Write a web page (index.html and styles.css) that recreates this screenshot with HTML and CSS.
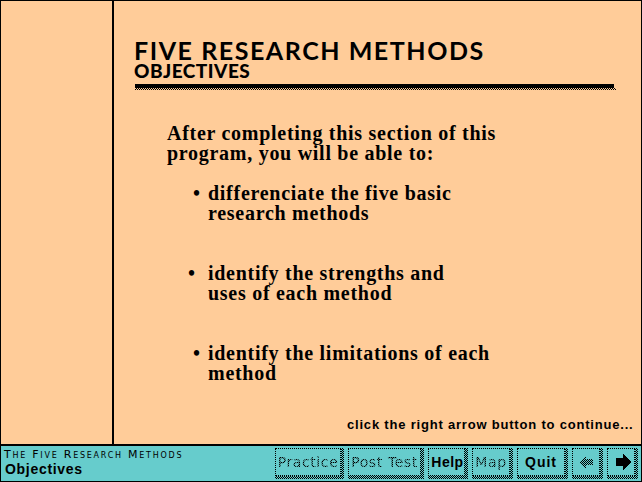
FILE: index.html
```html
<!DOCTYPE html>
<html lang="en">
<head>
<meta charset="utf-8">
<title>Five Research Methods</title>
<link rel="stylesheet" href="styles.css">
</head>
<body>
<div class="screen">
  <div class="stage">
    <aside class="side"></aside>
    <main class="content">
      <h1 class="title">Five Research Methods</h1>
      <h2 class="subtitle">Objectives</h2>
      <div class="rule"><div class="rule-solid"></div><div class="rule-dither"></div></div>
      <p class="intro">After completing this section of this<br>program, you will be able to:</p>
      <ul class="goals">
        <li class="goal"><span class="dot">•</span><span>differenciate the five basic<br>research methods</span></li>
        <li class="goal goal-wide"><span class="dot">•</span><span>identify the strengths and<br>uses of each method</span></li>
        <li class="goal"><span class="dot">•</span><span>identify the limitations of each<br>method</span></li>
      </ul>
      <p class="hint">click the right arrow button to continue...</p>
    </main>
  </div>
  <footer class="bar">
    <div class="crumbs">
      <div class="course">The Five Research Methods</div>
      <div class="section">Objectives</div>
    </div>
    <nav class="buttons">
      <div class="btn w-practice"><div class="face"><span class="off">Practice</span></div></div>
      <div class="btn w-post"><div class="face"><span class="off">Post Test</span></div></div>
      <div class="btn w-help"><div class="face"><span class="on help">Help</span></div></div>
      <div class="btn w-map"><div class="face"><span class="off">Map</span></div></div>
      <div class="btn w-quit"><div class="face"><span class="on">Quit</span></div></div>
      <div class="btn w-arrow"><div class="face">
        <svg class="arrow" width="14" height="14" viewBox="0 0 14 14" shape-rendering="crispEdges">
          <defs><pattern id="dith" width="2" height="2" patternUnits="userSpaceOnUse"><rect width="1" height="1"/><rect x="1" y="1" width="1" height="1"/></pattern></defs>
          <path d="M0 7 7 0V4H14V10H7V14Z" fill="url(#dith)"/>
        </svg>
      </div></div>
      <div class="btn w-arrow"><div class="face">
        <svg class="arrow arrow-next" width="15" height="18" viewBox="0 0 15 18" shape-rendering="crispEdges">
          <path d="M15 9 7 0V5H0V13H7V18Z"/>
        </svg>
      </div></div>
    </nav>
  </footer>
</div>
</body>
</html>
```
FILE: styles.css
```css
* { box-sizing: border-box; }
html, body { margin: 0; padding: 0; background: #000; }
.screen {
  width: 642px;
  height: 482px;
  display: flex;
  flex-direction: column;
  background: #66cccc;
  border: 1px solid #000;
  overflow: hidden;
}
.stage {
  height: 445px;
  flex: none;
  display: flex;
  background: #ffcc99;
  border-bottom: 2px solid #000;
}
.side {
  width: 113px;
  flex: none;
  border-right: 2px solid #000;
}
.content {
  flex: 1;
  min-width: 0;
  padding: 38px 0 0 20px;
  color: #000;
}
.title {
  margin: 0;
  font: 700 25px/22px Lato, "Liberation Sans", sans-serif;
  text-transform: uppercase;
  letter-spacing: 1.55px;
  white-space: nowrap;
}
.subtitle {
  margin: 0;
  font: 900 19px/20px Lato, "Liberation Sans", sans-serif;
  text-transform: uppercase;
  letter-spacing: 0.5px;
}
.rule { width: 481px; margin: 3px 0 0 1px; }
.rule-solid { width: 479px; height: 4px; background: #000; }
.rule-dither {
  height: 2px;
  background: repeating-conic-gradient(#000 0 25%, transparent 0 50%) 0 0 / 2px 2px;
}
.intro {
  margin: 33px 0 0 33px;
  font: 700 20px/20px "Liberation Serif", serif;
  letter-spacing: 0.72px;
  white-space: nowrap;
}
.goals {
  list-style: none;
  margin: 20px 0 0;
  padding: 0 0 0 49px;
  font: 700 20px/20px "Liberation Serif", serif;
  letter-spacing: 0.72px;
}
.goal {
  display: flex;
  height: 80px;
  white-space: nowrap;
}
.dot { width: 25px; padding-left: 10px; flex: none; }
.goal-wide .dot { padding-left: 5px; }
.hint {
  margin: -6px 0 0 213px;
  font: 700 13px/16px "Liberation Sans", sans-serif;
  letter-spacing: 0.8px;
  white-space: nowrap;
}
.bar {
  flex: 1;
  display: flex;
  justify-content: space-between;
  color: #000;
}
.crumbs { padding: 2px 0 0 3px; }
.course {
  font: 400 11px/13px "DejaVu Sans", sans-serif;
  font-variant: small-caps;
  letter-spacing: 1.75px;
  white-space: nowrap;
}
.section {
  margin: 1px 0 0 1px;
  font: 700 14px/15px "Liberation Sans", sans-serif;
  letter-spacing: 0.7px;
}
.buttons {
  display: flex;
  gap: 4px;
  padding: 2px 3px 0 0;
}
.btn {
  padding: 0 3px 3px 0;
  background: repeating-conic-gradient(#000 0 25%, transparent 0 50%) 0 0 / 2px 2px;
  height: 31px;
}
.face {
  height: 100%;
  display: flex;
  align-items: center;
  justify-content: center;
  background: #66cccc;
  border: 1px dotted #000;
}
.w-practice { width: 69px; }
.w-post { width: 76px; }
.w-help { width: 40px; }
.w-map { width: 41px; }
.w-quit { width: 51px; }
.w-arrow { width: 31px; }
.off {
  font: 400 14px/16px "DejaVu Sans", sans-serif;
  letter-spacing: 0.6px;
  color: transparent;
  background: repeating-conic-gradient(#000 0 25%, rgba(0, 0, 0, 0.3) 0 50%) 0 0 / 2px 2px;
  -webkit-background-clip: text;
  background-clip: text;
  white-space: nowrap;
}
.on {
  font: 700 14px/16px "Liberation Sans", sans-serif;
  letter-spacing: 1px;
  white-space: nowrap;
}
.help { letter-spacing: 0.5px; margin-left: 2px; }
.arrow { display: block; fill: #000; }
.arrow-next { margin-left: 4px; }
```
